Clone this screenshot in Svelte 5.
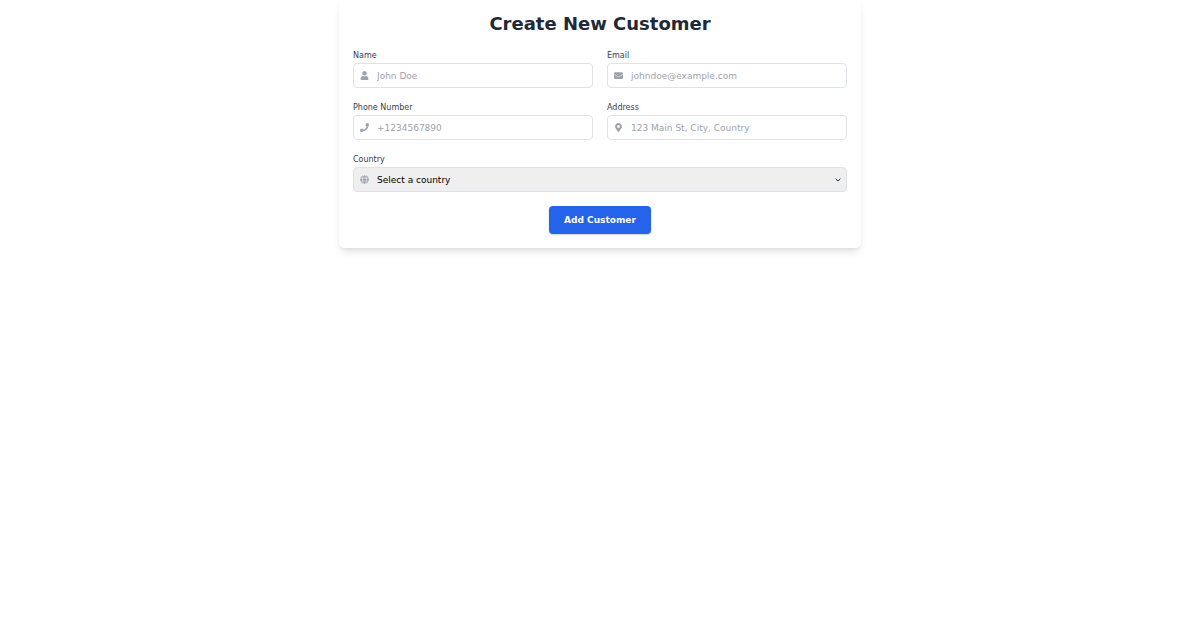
<script lang="ts">
  type Field = {
    id: string;
    label: string;
    type: string;
    placeholder: string;
    viewBox: string;
    icon: string;
  };

  const fields: Field[] = [
    {
      id: 'name',
      label: 'Name',
      type: 'text',
      placeholder: 'John Doe',
      viewBox: '0 0 448 512',
      icon: 'M224 256c70.7 0 128-57.3 128-128S294.7 0 224 0 96 57.3 96 128s57.3 128 128 128zm89.6 32h-16.7c-22.2 10.2-46.9 16-72.9 16s-50.6-5.8-72.9-16h-16.7C60.2 288 0 348.2 0 422.4V464c0 26.5 21.5 48 48 48h352c26.5 0 48-21.5 48-48v-41.6c0-74.2-60.2-134.4-134.4-134.4z'
    },
    {
      id: 'email',
      label: 'Email',
      type: 'email',
      placeholder: 'johndoe@example.com',
      viewBox: '0 0 512 512',
      icon: 'M502.3 190.8c3.9-3.1 9.7-.2 9.7 4.7V400c0 26.5-21.5 48-48 48H48c-26.5 0-48-21.5-48-48V195.6c0-5 5.7-7.8 9.7-4.7 22.4 17.4 52.1 39.5 154.1 113.6 21.1 15.4 56.7 47.8 92.2 47.6 35.7.3 72-32.8 92.3-47.6 102-74.1 131.6-96.3 154-113.7zM256 320c23.2.4 56.6-29.2 73.4-41.4 132.7-96.3 142.8-104.7 173.4-128.7 5.8-4.5 9.2-11.5 9.2-18.9v-19c0-26.5-21.5-48-48-48H48c-26.5 0-48 21.5-48 48v19c0 7.4 3.4 14.3 9.2 18.9 30.6 23.9 40.7 32.4 173.4 128.7 16.8 12.2 50.2 41.8 73.4 41.4z'
    },
    {
      id: 'phone',
      label: 'Phone Number',
      type: 'tel',
      placeholder: '+1234567890',
      viewBox: '0 0 512 512',
      icon: 'M493.4 24.6l-104-24c-11.3-2.6-22.9 3.3-27.5 13.9l-48 112c-4.2 9.8-1.4 21.3 6.9 28l60.6 49.6c-36 76.7-98.9 140.5-177.2 177.2l-49.6-60.6c-6.8-8.3-18.2-11.1-28-6.9l-112 48C3.9 366.5-2 378.1.6 389.4l24 104C27.1 504.2 36.7 512 48 512c256.1 0 464-207.5 464-464 0-11.2-7.7-20.9-18.6-23.4z'
    },
    {
      id: 'address',
      label: 'Address',
      type: 'text',
      placeholder: '123 Main St, City, Country',
      viewBox: '0 0 384 512',
      icon: 'M172.3 501.7C27 291 0 269.4 0 192 0 86 86 0 192 0s192 86 192 192c0 77.4-27 99-172.3 309.7-9.5 13.8-29.9 13.8-39.4 0zM192 272c44.2 0 80-35.8 80-80s-35.8-80-80-80-80 35.8-80 80 35.8 80 80 80z'
    }
  ];

  const countries = ['United States', 'Canada', 'United Kingdom', 'Australia', 'India'];

  let form: Record<string, string> = $state({
    name: '',
    email: '',
    phone: '',
    address: '',
    country: ''
  });

  function handleSubmit(event: SubmitEvent) {
    event.preventDefault();
  }
</script>

<main class="page">
  <section class="card">
    <h1>Create New Customer</h1>

    <form onsubmit={handleSubmit}>
      <div class="fields">
        {#each fields as field (field.id)}
          <div class="field">
            <label for={field.id}>{field.label}</label>
            <div class="control">
              <svg class="icon" viewBox={field.viewBox} aria-hidden="true">
                <path d={field.icon} />
              </svg>
              <input
                id={field.id}
                type={field.type}
                placeholder={field.placeholder}
                bind:value={form[field.id]}
              />
            </div>
          </div>
        {/each}

        <div class="field wide">
          <label for="country">Country</label>
          <div class="control">
            <svg class="icon" viewBox="0 0 496 512" aria-hidden="true">
              <path d="M336.5 160C322 70.7 287.8 8 248 8s-74 62.7-88.5 152h177zM152 256c0 22.2 1.2 43.5 3.3 64h185.3c2.1-20.5 3.3-41.8 3.3-64s-1.2-43.5-3.3-64H155.3c-2.1 20.5-3.3 41.8-3.3 64zm324.7-96c-28.6-67.9-86.5-120.4-158-141.6 24.4 33.8 41.2 84.7 50 141.6h108zM177.2 18.4C105.8 39.6 47.8 92.1 19.3 160h108c8.7-56.9 25.5-107.8 49.9-141.6zM487.4 192H372.7c2.1 21 3.3 42.5 3.3 64s-1.2 43-3.3 64h114.6c5.5-20.5 8.6-41.8 8.6-64s-3.1-43.5-8.5-64zM120 256c0-21.5 1.2-43 3.3-64H8.6C3.2 212.5 0 233.8 0 256s3.2 43.5 8.6 64h114.6c-2-21-3.2-42.5-3.2-64zm39.5 96c14.5 89.3 48.7 152 88.5 152s74-62.7 88.5-152h-177zm159.3 141.6c71.4-21.2 129.4-73.7 158-141.6h-108c-8.8 56.9-25.6 107.8-50 141.6zM19.3 352c28.6 67.9 86.5 120.4 158 141.6-24.4-33.8-41.2-84.7-50-141.6h-108z" />
            </svg>
            <select id="country" bind:value={form.country}>
              <option value="">Select a country</option>
              {#each countries as country}
                <option value={country}>{country}</option>
              {/each}
            </select>
            <svg class="chevron" viewBox="0 0 6 4" aria-hidden="true">
              <path d="M0.6 0.7 3 3 5.4 0.7" />
            </svg>
          </div>
        </div>
      </div>

      <button type="submit">Add Customer</button>
    </form>
  </section>
</main>

<style>
  :global(body) {
    background-color: #ffffff;
    font-family: 'DejaVu Sans', sans-serif;
  }

  .page {
    min-height: 100vh;
  }

  .card {
    box-sizing: border-box;
    max-width: 522px;
    margin: 0 auto;
    padding: 14px;
    background-color: #ffffff;
    border-radius: 5px;
    box-shadow:
      0 6px 9px -2px rgba(0, 0, 0, 0.1),
      0 2px 4px -2px rgba(0, 0, 0, 0.1);
  }

  h1 {
    margin: 0 0 16px;
    color: #1f2937;
    font-size: 18px;
    font-weight: 700;
    line-height: 20px;
    text-align: center;
  }

  form {
    display: flex;
    flex-direction: column;
    align-items: center;
    gap: 14px;
  }

  .fields {
    display: grid;
    grid-template-columns: 1fr 1fr;
    gap: 14px;
    width: 100%;
  }

  .field {
    display: flex;
    flex-direction: column;
    gap: 1px;
    min-width: 0;
  }

  .wide {
    grid-column: 1 / -1;
  }

  label {
    color: #374151;
    font-size: 8px;
    line-height: 12px;
  }

  .control {
    display: grid;
    align-items: center;
  }

  .control > * {
    grid-area: 1 / 1;
  }

  .icon {
    z-index: 1;
    width: 9px;
    height: 9px;
    margin-left: 7px;
    fill: #9ca3af;
    pointer-events: none;
  }

  input,
  select {
    box-sizing: border-box;
    width: 100%;
    height: 25px;
    margin: 0;
    padding: 0 7px 0 23px;
    border: 1px solid #dfe2e6;
    border-radius: 4px;
    background-color: #ffffff;
    color: #000000;
    font-family: inherit;
    font-size: 9px;
  }

  input::placeholder {
    color: #9ca3af;
  }

  select {
    appearance: none;
    background-color: #efefef;
  }

  input:focus,
  select:focus {
    border-color: #2563eb;
    outline: none;
  }

  .chevron {
    z-index: 1;
    justify-self: end;
    width: 6px;
    height: 4px;
    margin-right: 6px;
    fill: none;
    stroke: #1f2937;
    stroke-width: 1;
    pointer-events: none;
  }

  button {
    height: 28px;
    padding: 0 15px;
    border: none;
    border-radius: 4px;
    background-color: #2563eb;
    box-shadow: 0 1px 2px rgba(0, 0, 0, 0.2);
    color: #ffffff;
    font-family: inherit;
    font-size: 9px;
    font-weight: 700;
    cursor: pointer;
  }

  button:hover {
    background-color: #1d4ed8;
  }
</style>
